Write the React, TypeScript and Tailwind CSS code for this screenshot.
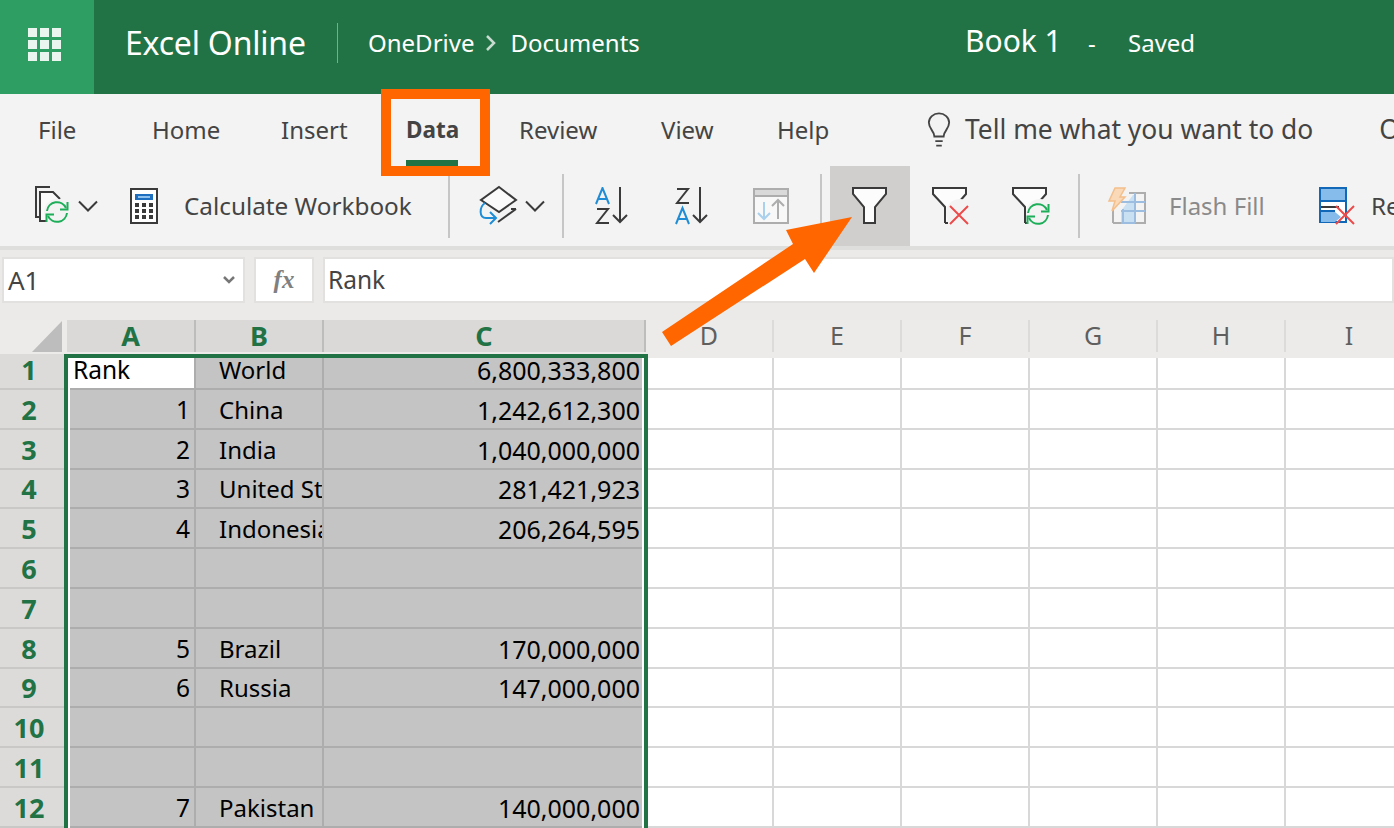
const columns = [
  { label: 'A', width: 'w-[129px]', active: true },
  { label: 'B', width: 'w-[128px]', active: true },
  { label: 'C', width: 'w-[322px]', active: true },
  { label: 'D', width: 'w-[128px]', active: false },
  { label: 'E', width: 'w-[128px]', active: false },
  { label: 'F', width: 'w-[128px]', active: false },
  { label: 'G', width: 'w-[128px]', active: false },
  { label: 'H', width: 'w-[128px]', active: false },
  { label: 'I', width: 'w-[128px]', active: false },
]

const rows = [
  ['Rank', 'World', '6,800,333,800'],
  ['1', 'China', '1,242,612,300'],
  ['2', 'India', '1,040,000,000'],
  ['3', 'United States', '281,421,923'],
  ['4', 'Indonesia', '206,264,595'],
  ['', '', ''],
  ['', '', ''],
  ['5', 'Brazil', '170,000,000'],
  ['6', 'Russia', '147,000,000'],
  ['', '', ''],
  ['', '', ''],
  ['7', 'Pakistan', '140,000,000'],
]

const tabs = [
  { label: 'Home', width: 'w-[129px]' },
  { label: 'Insert', width: 'w-[125px]' },
  { label: 'Data', width: 'w-[113px]' },
  { label: 'Review', width: 'w-[142px]' },
  { label: 'View', width: 'w-[116px]' },
  { label: 'Help', width: 'w-[150px]' },
]

function Chevron() {
  return (
    <svg className="shrink-0" width="20" height="12" viewBox="0 0 20 12" fill="none" stroke="#3a3a3a" strokeWidth="2">
      <path d="M1 1.5 10 10.5 19 1.5" />
    </svg>
  )
}

function Sync({ cx, cy }: { cx: number; cy: number }) {
  return (
    <g transform={`translate(${cx} ${cy})`} fill="none" stroke="#1cae58" strokeWidth="2">
      <path d="M-10 -1A10 10 0 0 1 9 -4" />
      <path d="M10 1A10 10 0 0 1 -9 4" />
      <path d="M10.5 -10V-2.5H3" />
      <path d="M-10.5 10V2.5H-3" />
    </g>
  )
}

function PasteSyncIcon() {
  return (
    <svg width="36" height="42" viewBox="0 0 36 42" fill="none">
      <path d="M16 2H2V32H5" stroke="#3a3a3a" strokeWidth="2" />
      <path d="M12 36H6V7H19L26 14" stroke="#3a3a3a" strokeWidth="2" fill="#fafafa" />
      <circle cx="23" cy="27" r="13" fill="#f3f3f3" />
      <Sync cx={23} cy={27} />
    </svg>
  )
}

function CalculatorIcon() {
  return (
    <svg width="28" height="36" viewBox="0 0 28 36">
      <rect x="1" y="1" width="26" height="34" fill="#fff" stroke="#3a3a3a" strokeWidth="2" />
      <rect x="5" y="6" width="18" height="6" fill="#1f6fc0" />
      <rect x="8" y="8" width="12" height="2" fill="#8ec1ee" />
      {[15, 21, 27].map((y) =>
        [5, 12, 19].map((x) => <rect key={`${x}-${y}`} x={x} y={y} width="4" height="4" fill="#3a3a3a" />),
      )}
    </svg>
  )
}

function LayersIcon() {
  return (
    <svg width="40" height="42" viewBox="0 0 40 42" fill="none">
      <path d="M20 2 37 15 20 27 2 15Z" stroke="#3a3a3a" strokeWidth="2" fill="#fafafa" />
      <path d="M37 24 19 37" stroke="#3a3a3a" strokeWidth="2" />
      <path d="M32 24 37 24" stroke="#3a3a3a" strokeWidth="2" />
      <path d="M6 18C0 22 0 33 7 33H17" stroke="#1f8dd6" strokeWidth="2" />
      <path d="M11 27 17 33 11 39" stroke="#1f8dd6" strokeWidth="2" />
    </svg>
  )
}

function SortIcon({ top, bottom }: { top: string; bottom: string }) {
  return (
    <svg width="34" height="38" viewBox="0 0 34 38" fill="none">
      {top === 'A' ? (
        <path d="M1 17 7.5 1 14 17M3.5 12H11.5" stroke="#1f8dd6" strokeWidth="2" />
      ) : (
        <path d="M2 2H13L2 16H14" stroke="#3a3a3a" strokeWidth="2" />
      )}
      {bottom === 'Z' ? (
        <path d="M2 22H13L2 36H14" stroke="#3a3a3a" strokeWidth="2" />
      ) : (
        <path d="M1 37 7.5 21 14 37M3.5 32H11.5" stroke="#1f8dd6" strokeWidth="2" />
      )}
      <path d="M25 0V35M18 28 25 35 32 28" stroke="#3a3a3a" strokeWidth="2" />
    </svg>
  )
}

function ReapplyGrayIcon() {
  return (
    <svg width="36" height="36" viewBox="0 0 36 36" fill="none">
      <rect x="1" y="1" width="34" height="34" fill="#f8f8f8" stroke="#adadad" strokeWidth="2" />
      <rect x="2" y="2" width="32" height="5" fill="#d9d9d9" />
      <path d="M2 8H34" stroke="#adadad" strokeWidth="2" />
      <path d="M11 14V31M5 25 11 31 17 25" stroke="#a9d0ec" strokeWidth="2" />
      <path d="M25 31V12M19 18 25 12 31 18" stroke="#adadad" strokeWidth="2" />
    </svg>
  )
}

function FunnelIcon({ children, open }: { children?: React.ReactNode; open?: boolean }) {
  return (
    <svg width="40" height="40" viewBox="0 0 40 40" fill="none">
      <path
        d={open ? 'M15 37V21L3 8V2H36V8L29 16M15 37H18' : 'M14 37V21L3 8V2H36V8L25 21V37Z'}
        stroke="#3a3a3a"
        strokeWidth="2"
        fill="#fcfcfc"
      />
      {children}
    </svg>
  )
}

function RedX({ cx, cy, r }: { cx: number; cy: number; r: number }) {
  return (
    <path
      d={`M${cx - r} ${cy - r}L${cx + r} ${cy + r}M${cx + r} ${cy - r}L${cx - r} ${cy + r}`}
      stroke="#ec4a4a"
      strokeWidth="2"
    />
  )
}

function FlashFillIcon() {
  return (
    <svg width="40" height="38" viewBox="0 0 40 38" fill="none">
      <path d="M6 36V22M6 36H38V6H22" stroke="#adadad" strokeWidth="2" />
      <path d="M14 24 26 8H28V36H14Z" fill="#c9dff2" />
      <path d="M14 24H38M14 15H38M16 36V22M28 6V36M14 36H28" stroke="#9dbde0" strokeWidth="2" />
      <path d="M8 1H18L13 10H18L5 24 8 14H2Z" fill="#f9d9b8" stroke="#f3bf8c" strokeWidth="1.5" />
    </svg>
  )
}

function RemoveDuplicatesIcon() {
  return (
    <svg width="36" height="38" viewBox="0 0 36 38" fill="none">
      <rect x="1" y="1" width="26" height="34" fill="#fff" stroke="#1168b8" strokeWidth="2" />
      <rect x="2" y="2" width="24" height="11" fill="#85bcec" />
      <path d="M1 14H27" stroke="#1168b8" strokeWidth="2" />
      <path d="M2 20H20" stroke="#3a3a3a" strokeWidth="2" />
      <path d="M2 25H16L22 30 16 35H2Z" fill="#85bcec" />
      <path d="M2 24H16" stroke="#1168b8" strokeWidth="2" />
      <RedX cx={26} cy={28} r={9} />
    </svg>
  )
}

function Separator({ className }: { className: string }) {
  return <div className={`h-[64px] w-[2px] shrink-0 bg-[#c6c6c6] ${className}`} />
}

function Header() {
  return (
    <header className="flex h-[94px] items-center bg-[#217346] pb-[8px] text-white">
      <div className="-mb-[8px] flex h-[94px] w-[94px] shrink-0 items-center justify-center bg-[#2f9e63] pr-[6px] pb-[6px]">
        <div className="grid grid-cols-3 gap-[3px]">
          {Array.from({ length: 9 }).map((_, i) => (
            <div key={i} className="h-[9px] w-[9px] bg-white/90" />
          ))}
        </div>
      </div>
      <div className="ml-[31px] w-[212px] text-[32px] tracking-[-0.2px]">Excel Online</div>
      <div className="h-[40px] w-px bg-white/40" />
      <div className="ml-[30px] flex w-[597px] items-center text-[24px]">
        OneDrive
        <svg className="mr-[13px] ml-[11px]" width="12" height="16" viewBox="0 0 12 16" fill="none" stroke="#c8dcd0" strokeWidth="2.5">
          <path d="M2 1 9 8 2 15" />
        </svg>
        Documents
      </div>
      <div className="mb-[6px] w-[123px] text-[30px]">Book 1</div>
      <div className="w-[40px] text-[24px]">-</div>
      <div className="text-[24px]">Saved</div>
    </header>
  )
}

function Ribbon() {
  return (
    <div className="bg-[#f3f3f3] text-[#444]">
      <div className="flex h-[72px] items-center overflow-hidden pl-[38px] text-[24px] whitespace-nowrap">
        <span className="w-[114px] shrink-0">File</span>
        {tabs.map((tab) => (
          <span key={tab.label} className={`shrink-0 ${tab.width} ${tab.label === 'Data' ? 'text-[22.5px] font-bold' : ''}`}>
            {tab.label}
          </span>
        ))}
        <svg className="shrink-0" width="24" height="36" viewBox="0 0 26 38" fill="none" stroke="#444" strokeWidth="2">
          <path d="M8 26C8 20 2 18 2 11A11 10 0 0 1 24 11C24 18 18 20 18 26Z" />
          <path d="M9 31H17M10 36H16" />
        </svg>
        <span className="ml-[14px] shrink-0 text-[26.4px]">Tell me what you want to do</span>
        <span className="ml-[66px] shrink-0 text-[26.4px]">Open</span>
      </div>
      <div className="flex h-[80px] items-center overflow-hidden text-[24.3px] whitespace-nowrap">
        <div className="ml-[34px] shrink-0">
          <PasteSyncIcon />
        </div>
        <div className="ml-[8px] shrink-0">
          <Chevron />
        </div>
        <div className="ml-[32px] shrink-0">
          <CalculatorIcon />
        </div>
        <span className="ml-[26px] w-[228px] shrink-0">Calculate Workbook</span>
        <Separator className="ml-[36px]" />
        <div className="ml-[29px] shrink-0">
          <LayersIcon />
        </div>
        <div className="ml-[6px] shrink-0">
          <Chevron />
        </div>
        <Separator className="ml-[17px]" />
        <div className="ml-[31px] shrink-0">
          <SortIcon top="A" bottom="Z" />
        </div>
        <div className="ml-[46px] shrink-0">
          <SortIcon top="Z" bottom="A" />
        </div>
        <div className="ml-[44px] shrink-0">
          <ReapplyGrayIcon />
        </div>
        <Separator className="ml-[31px]" />
        <div className="ml-[8px] flex h-[80px] w-[80px] shrink-0 items-center justify-center bg-[#d0cfcd]">
          <FunnelIcon />
        </div>
        <div className="ml-[20px] shrink-0">
          <FunnelIcon open>
            <circle cx="30" cy="27" r="14" fill="#f3f3f3" />
            <RedX cx={29} cy={29} r={9} />
          </FunnelIcon>
        </div>
        <div className="ml-[40px] shrink-0">
          <FunnelIcon open>
            <circle cx="30" cy="27" r="14" fill="#f3f3f3" />
            <Sync cx={28} cy={28} />
          </FunnelIcon>
        </div>
        <Separator className="ml-[28px]" />
        <div className="ml-[27px] shrink-0">
          <FlashFillIcon />
        </div>
        <span className="ml-[22px] w-[96px] shrink-0 text-[24px] text-[#8a8a8a]">Flash Fill</span>
        <div className="ml-[54px] shrink-0">
          <RemoveDuplicatesIcon />
        </div>
        <span className="ml-[16px] shrink-0">Remove</span>
      </div>
      <div className="h-[4px] bg-[#dededc]" />
    </div>
  )
}

function FormulaBar() {
  return (
    <div className="flex h-[70px] items-start gap-[9px] bg-[#ebeae8] pl-[2px] pt-[7px] text-[24.5px] text-[#444]">
      <div className="flex h-[46px] w-[243px] shrink-0 items-center justify-between border-2 border-[#e2e1df] bg-white pl-[4px] pr-[8px] text-[26px]">
        A1
        <svg width="12" height="8" viewBox="0 0 12 8" fill="none" stroke="#777" strokeWidth="2.5">
          <path d="M1 1 6 6 11 1" />
        </svg>
      </div>
      <div className="flex h-[46px] w-[60px] shrink-0 items-center justify-center border-2 border-[#e2e1df] bg-white font-['Liberation_Serif',serif] text-[25px] font-bold text-[#808080] italic">
        fx
      </div>
      <div className="flex h-[46px] flex-1 items-center border-2 border-[#e2e1df] bg-white pl-[3px]">Rank</div>
    </div>
  )
}

function Sheet() {
  return (
    <div className="relative flex-1 overflow-hidden bg-white text-[25px]">
      <div className="flex h-[38px] bg-[#ecebe9]">
        <div className="flex w-[67px] shrink-0 justify-end pr-[5px]">
          <svg width="30" height="32" viewBox="0 0 30 32">
            <path d="M30 1V32H0Z" fill="#bdbdbd" />
          </svg>
        </div>
        {columns.map((col) => (
          <div
            key={col.label}
            className={`flex h-[32px] shrink-0 items-center justify-center border-r-2 pb-[2px] leading-none ${col.width} ${
              col.active
                ? 'border-[#bdbdbb] bg-[#dad9d7] text-[27px] font-bold text-[#217346]'
                : 'border-[#dcdbd9] text-[25px] text-[#5f5f5f]'
            }`}
          >
            {col.label}
          </div>
        ))}
      </div>
      {rows.map((row, i) => (
        <div key={i} className={`flex ${i === 0 ? 'h-[32px]' : 'h-[39.8px]'}`}>
          <div
            className={`flex w-[67px] shrink-0 items-end justify-center border-b-2 border-[#c9c8c6] bg-[#dcdbd9] pr-[9px] text-[27px] leading-[36px] font-bold text-[#217346] ${
              i === 0 ? 'relative z-10 -mt-[4px]' : ''
            }`}
          >
            {i + 1}
          </div>
          <div
            className={`flex w-[129px] shrink-0 items-end overflow-hidden border-r-2 border-b-2 border-[#adadad] pb-[4px] pl-[6px] pr-[4px] text-[24.5px] leading-[28px] text-black ${
              i === 0 ? 'bg-white' : 'justify-end bg-[#c4c4c4]'
            }`}
          >
            {row[0]}
          </div>
          <div className="flex w-[128px] shrink-0 items-end overflow-hidden border-r-2 border-b-2 border-[#adadad] bg-[#c4c4c4] pb-[4px] pl-[23px] text-[24px] leading-[28px] whitespace-nowrap text-black">
            {row[1]}
          </div>
          <div className="flex w-[322px] shrink-0 items-end justify-end border-b-2 border-[#adadad] bg-[#c4c4c4] pb-[4px] pr-[6px] leading-[28px] text-black">
            {row[2]}
          </div>
          {columns.slice(3).map((col) => (
            <div key={col.label} className={`shrink-0 border-r-2 border-b-2 border-[#d8d8d8] ${col.width}`} />
          ))}
        </div>
      ))}
      {/* range selection */}
      <div className="pointer-events-none absolute top-[34px] left-[64px] z-20 h-[500px] w-[584px] border-x-[4px] border-t-[4px] border-[#217346]">
        <div className="h-full w-full border-x-2 border-white" />
      </div>
    </div>
  )
}

export default function App() {
  return (
    <div className="relative flex h-[828px] w-[1394px] flex-col overflow-hidden bg-white font-['Noto_Sans',sans-serif] text-[24px]">
      <Header />
      <Ribbon />
      <FormulaBar />
      <Sheet />

      {/* callouts drawn on top of the screenshot */}
      <div className="absolute top-[89px] left-[381px] h-[87px] w-[109px] border-[10px] border-[#ff6600]" />
      <div className="absolute top-[160px] left-[406px] h-[6px] w-[52px] bg-[#217346]" />
      <svg className="absolute top-0 left-0" width="1394" height="828" viewBox="0 0 1394 828">
        <polygon points="662,332 793,244 786,230 852,217 814,273 805,259 671,346" fill="#ff6600" />
      </svg>
    </div>
  )
}
